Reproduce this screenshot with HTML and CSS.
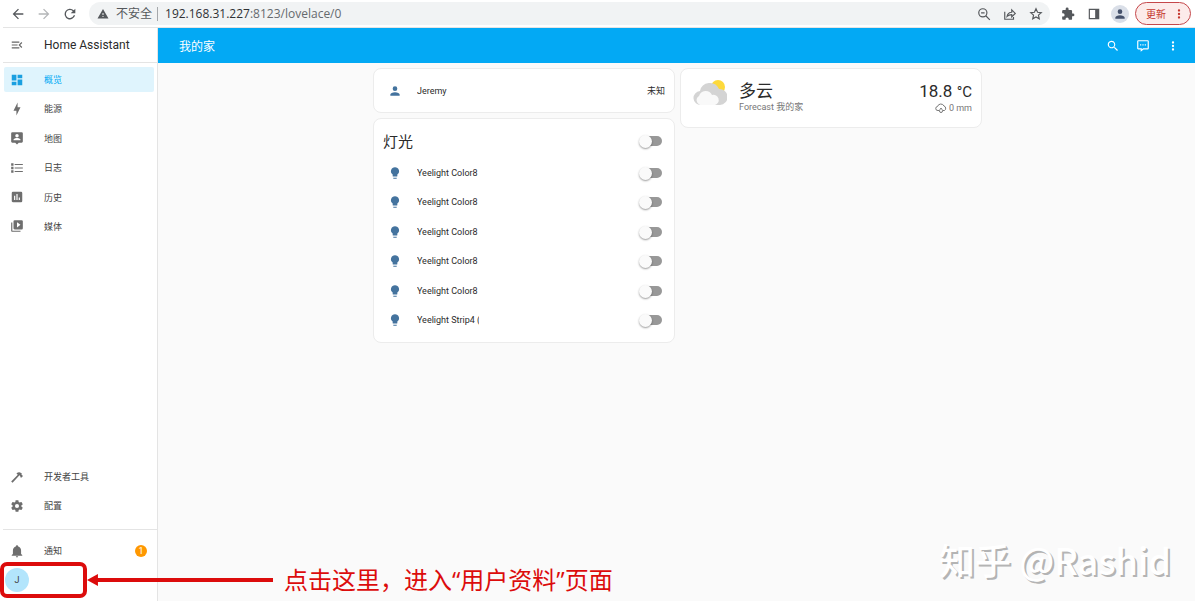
FILE: index.html
```html
<!DOCTYPE html>
<html lang="zh-CN">
<head>
  <meta charset="UTF-8" />
  <meta name="viewport" content="width=device-width, initial-scale=1.0"/>
  <title>Home Assistant</title>
  <link rel="stylesheet" href="styles.css">
</head>
<body>
  <div class="browser-bar">
    <button class="bar-btn" aria-label="后退"><svg viewBox="0 0 24 24"><path d="M20 11H7.8l5.6-5.6L12 4l-8 8 8 8 1.4-1.4L7.8 13H20z"/></svg></button>
    <button class="bar-btn disabled" aria-label="前进"><svg viewBox="0 0 24 24"><path d="M4 11h12.2l-5.6-5.6L12 4l8 8-8 8-1.4-1.4 5.6-5.6H4z"/></svg></button>
    <button class="bar-btn" aria-label="刷新"><svg viewBox="0 0 24 24"><path d="M17.6 6.4A8 8 0 1 0 19.7 14h-2.1A6 6 0 1 1 12 6c1.7 0 3.1.7 4.2 1.8L13 11h7V4z"/></svg></button>
    <div class="address">
      <svg class="warn" viewBox="0 0 24 24"><path d="M1 21h22L12 2zm12-3h-2v-2h2zm0-4h-2v-4h2z"/></svg>
      <span class="insecure">不安全</span>
      <span class="url"><b>192.168.31.227</b>:8123/lovelace/0</span>
      <button class="bar-btn small" aria-label="缩放"><svg viewBox="0 0 24 24" class="line"><circle cx="10" cy="10" r="7"/><path d="M15 15l7 7M7 10h6"/></svg></button>
      <button class="bar-btn small" aria-label="分享"><svg viewBox="0 0 24 24" class="line"><path d="M3 8v13h15v-4M7 16c1-5 4-7 8-7V5l6 6-6 6v-4c-4 0-6 1-8 3z"/></svg></button>
      <button class="bar-btn small" aria-label="收藏"><svg viewBox="0 0 24 24" class="line"><path d="M12 3l2.700 6 6.300.600-4.800 4.300 1.400 6.400L12 17l-5.600 3.300 1.400-6.400L3 9.600 9.300 9z"/></svg></button>
    </div>
    <button class="bar-btn small" aria-label="扩展程序"><svg viewBox="0 0 24 24"><path d="M20.500 11H19V7a2 2 0 0 0-2-2h-4V3.500a2.500 2.500 0 0 0-5 0V5H4a2 2 0 0 0-2 2v3.800h1.500a2.700 2.700 0 0 1 0 5.400H2V20c0 1.100.9 2 2 2h3.800v-1.500a2.700 2.700 0 0 1 5.400 0V22H17a2 2 0 0 0 2-2v-4h1.500a2.500 2.500 0 0 0 0-5z"/></svg></button>
    <button class="bar-btn small" aria-label="侧边栏"><svg viewBox="0 0 24 24"><path d="M3 3h18v18H3zm2 2v14h9V5z"/></svg></button>
    <button class="bar-btn small avatar" aria-label="用户"><svg viewBox="0 0 24 24"><path d="M12 12a4 4 0 1 0 0-8 4 4 0 0 0 0 8zm0 2c-4 0-8 2-8 4v2h16v-2c0-2-4-4-8-4z"/></svg></button>
    <button class="update">更新<svg viewBox="0 0 24 24"><path d="M12 8a2 2 0 1 0 0-4 2 2 0 0 0 0 4zm0 6a2 2 0 1 0 0-4 2 2 0 0 0 0 4zm0 6a2 2 0 1 0 0-4 2 2 0 0 0 0 4z"/></svg></button>
  </div>

  <div class="app">
    <aside class="sidebar">
      <div class="sidebar-title">
        <button class="icon-btn" aria-label="菜单"><svg viewBox="0 0 24 24"><path d="M21 15.600L17.400 12 21 8.400 19.600 7l-5 5 5 5zM3 6h13v2H3zm0 5h10v2H3zm0 5h13v2H3z"/></svg></button>
        <h1>Home Assistant</h1>
      </div>

      <nav class="nav-list nav-main">
        <a href="#" class="active"><svg viewBox="0 0 24 24"><path d="M13 3v6h8V3m-8 18h8V11h-8M3 21h8v-6H3m0-2h8V3H3z"/></svg>概览</a>
        <a href="#"><svg viewBox="0 0 24 24"><path d="M11 15H6l7-14v8h5l-7 14z"/></svg>能源</a>
        <a href="#"><svg viewBox="0 0 24 24"><path d="M20 2H4a2 2 0 0 0-2 2v14c0 1.100.9 2 2 2h5l3 3 3-3h5a2 2 0 0 0 2-2V4a2 2 0 0 0-2-2zm-8 3a3 3 0 1 1 0 6 3 3 0 0 1 0-6zm6 11H6v-1c0-2 4-3 6-3s6 1 6 3z"/></svg>地图</a>
        <a href="#"><svg viewBox="0 0 24 24"><path d="M8 5h14v2H8zm0 6h14v2H8zm0 6h14v2H8zM2 4h4v4H2zm0 6h4v4H2zm0 6h4v4H2z"/></svg>日志</a>
        <a href="#"><svg viewBox="0 0 24 24"><path d="M19 3H5a2 2 0 0 0-2 2v14c0 1.100.9 2 2 2h14a2 2 0 0 0 2-2V5a2 2 0 0 0-2-2zM9 17H7v-7h2zm4 0h-2V7h2zm4 0h-2v-4h2z"/></svg>历史</a>
        <a href="#"><svg viewBox="0 0 24 24"><path d="M4 6H2v14c0 1.100.9 2 2 2h14v-2H4zm16-4H8a2 2 0 0 0-2 2v12c0 1.100.9 2 2 2h12a2 2 0 0 0 2-2V4a2 2 0 0 0-2-2zm-8 12.500v-9l6 4.500z"/></svg>媒体</a>
      </nav>

      <nav class="nav-list nav-tools">
        <a href="#"><svg viewBox="0 0 24 24"><path d="M2 19.600L13.400 8.200 11 6c2.500-2 5-3 8-1l1.500 1.500-1 1 2.800 2.800-3.500 3.500-2.100-4.700-1.200.9L4.400 22z"/></svg>开发者工具</a>
        <a href="#"><svg viewBox="0 0 24 24"><path d="M12 15.500a3.500 3.500 0 1 1 0-7 3.500 3.500 0 0 1 0 7m7.430-2.530c.04-.32.07-.64.07-.97s-.03-.66-.07-1l2.110-1.630c.19-.15.24-.42.12-.64l-2-3.460c-.12-.22-.39-.31-.61-.22l-2.490 1c-.52-.39-1.060-.73-1.690-.98l-.37-2.650A.5.5 0 0 0 14 2h-4c-.25 0-.46.18-.5.42l-.37 2.650c-.63.25-1.170.59-1.690.98l-2.490-1c-.22-.09-.49 0-.61.22l-2 3.460c-.13.22-.07.49.12.64L4.570 11c-.04.34-.07.67-.07 1s.03.65.07.97l-2.110 1.660c-.19.15-.25.42-.12.64l2 3.460c.12.22.39.3.61.22l2.490-1.010c.52.4 1.060.74 1.690.99l.37 2.650c.04.24.25.42.5.42h4c.25 0 .46-.18.5-.42l.37-2.650c.63-.26 1.170-.59 1.690-.99l2.490 1.010c.22.08.49 0 .61-.22l2-3.460c.12-.22.07-.49-.12-.64z"/></svg>配置</a>
      </nav>

      <nav class="nav-list nav-user">
        <a href="#"><svg viewBox="0 0 24 24"><path d="M21 19v1H3v-1l2-2v-6c0-3.100 2-5.800 5-6.700V4a2 2 0 0 1 4 0v.3c3 .9 5 3.600 5 6.700v6zm-7 2a2 2 0 0 1-4 0"/></svg>通知<span class="badge">1</span></a>
        <a href="#" class="profile" aria-label="用户资料"><span class="initial">J</span></a>
      </nav>
    </aside>

    <main class="main">
      <header class="toolbar">
        <h2>我的家</h2>
        <button class="icon-btn" aria-label="搜索"><svg viewBox="0 0 24 24"><path d="M9.500 3a6.500 6.500 0 0 1 4.900 10.700l.3.300h.8l5 5-1.500 1.500-5-5v-.8l-.3-.3A6.500 6.500 0 1 1 9.500 3m0 2a4.500 4.500 0 1 0 0 9 4.500 4.500 0 0 0 0-9z"/></svg></button>
        <button class="icon-btn" aria-label="对话"><svg viewBox="0 0 24 24"><path d="M20 2H4a2 2 0 0 0-2 2v12c0 1.100.9 2 2 2h4v4l5-4h7a2 2 0 0 0 2-2V4a2 2 0 0 0-2-2zm0 14h-8l-2 2v-2H4V4h16zM7 9h2v2H7zm4 0h2v2h-2zm4 0h2v2h-2z"/></svg></button>
        <button class="icon-btn" aria-label="更多"><svg viewBox="0 0 24 24"><path d="M12 8a2 2 0 1 0 0-4 2 2 0 0 0 0 4zm0 6a2 2 0 1 0 0-4 2 2 0 0 0 0 4zm0 6a2 2 0 1 0 0-4 2 2 0 0 0 0 4z"/></svg></button>
      </header>

      <div class="cards">
        <div class="column">
          <section class="card person">
            <div class="row">
              <svg viewBox="0 0 24 24"><path d="M12 4a4 4 0 1 1 0 8 4 4 0 0 1 0-8m0 10c4.400 0 8 1.800 8 4v2H4v-2c0-2.200 3.600-4 8-4z"/></svg>
              <span class="name">Jeremy</span>
              <span class="state">未知</span>
            </div>
          </section>

          <section class="card lights">
            <div class="card-header">
              <label for="all">灯光</label>
              <input type="checkbox" class="switch" id="all">
            </div>
            <div class="rows">
              <div class="row">
                <svg viewBox="0 0 24 24"><path d="M12 2a7 7 0 0 0-4 12.700V17c0 .6.400 1 1 1h6c.6 0 1-.4 1-1v-2.300A7 7 0 0 0 12 2zM9 20h6v1c0 .6-.4 1-1 1h-4c-.6 0-1-.4-1-1z"/></svg>
                <label class="name" for="l1">Yeelight Color8</label>
                <input type="checkbox" class="switch" id="l1">
              </div>
              <div class="row">
                <svg viewBox="0 0 24 24"><path d="M12 2a7 7 0 0 0-4 12.700V17c0 .6.400 1 1 1h6c.6 0 1-.4 1-1v-2.300A7 7 0 0 0 12 2zM9 20h6v1c0 .6-.4 1-1 1h-4c-.6 0-1-.4-1-1z"/></svg>
                <label class="name" for="l2">Yeelight Color8</label>
                <input type="checkbox" class="switch" id="l2">
              </div>
              <div class="row">
                <svg viewBox="0 0 24 24"><path d="M12 2a7 7 0 0 0-4 12.700V17c0 .6.400 1 1 1h6c.6 0 1-.4 1-1v-2.300A7 7 0 0 0 12 2zM9 20h6v1c0 .6-.4 1-1 1h-4c-.6 0-1-.4-1-1z"/></svg>
                <label class="name" for="l3">Yeelight Color8</label>
                <input type="checkbox" class="switch" id="l3">
              </div>
              <div class="row">
                <svg viewBox="0 0 24 24"><path d="M12 2a7 7 0 0 0-4 12.700V17c0 .6.400 1 1 1h6c.6 0 1-.4 1-1v-2.300A7 7 0 0 0 12 2zM9 20h6v1c0 .6-.4 1-1 1h-4c-.6 0-1-.4-1-1z"/></svg>
                <label class="name" for="l4">Yeelight Color8</label>
                <input type="checkbox" class="switch" id="l4">
              </div>
              <div class="row">
                <svg viewBox="0 0 24 24"><path d="M12 2a7 7 0 0 0-4 12.700V17c0 .6.400 1 1 1h6c.6 0 1-.4 1-1v-2.300A7 7 0 0 0 12 2zM9 20h6v1c0 .6-.4 1-1 1h-4c-.6 0-1-.4-1-1z"/></svg>
                <label class="name" for="l5">Yeelight Color8</label>
                <input type="checkbox" class="switch" id="l5">
              </div>
              <div class="row">
                <svg viewBox="0 0 24 24"><path d="M12 2a7 7 0 0 0-4 12.700V17c0 .6.400 1 1 1h6c.6 0 1-.4 1-1v-2.300A7 7 0 0 0 12 2zM9 20h6v1c0 .6-.4 1-1 1h-4c-.6 0-1-.4-1-1z"/></svg>
                <label class="name" for="l6">Yeelight Strip4 (</label>
                <input type="checkbox" class="switch" id="l6">
              </div>
            </div>
          </section>
        </div>

        <div class="column">
          <section class="card weather">
            <svg class="weather-icon" viewBox="0 0 34 28">
              <circle cx="25" cy="8" r="7" fill="#fdd93c"/>
              <path fill="#d4d4d4" d="M8 26a7 7 0 0 1-1-14 10 10 0 0 1 19-2 8 8 0 0 1 1 16z"/>
              <path fill="#f9f9f9" d="M7 26a5 5 0 0 1-1-9 7 7 0 0 1 13-1 5 5 0 0 1 3 10z"/>
            </svg>
            <div class="weather-info">
              <div class="big">多云</div>
              <div class="sub">Forecast 我的家</div>
            </div>
            <div class="weather-temp">
              <div class="big">18.8 <span class="unit">°C</span></div>
              <div class="sub"><svg viewBox="0 0 24 24" class="line"><path d="M8 17H6a4 4 0 0 1-1-8 7 7 0 0 1 13-1 5 5 0 0 1 1 9h-3M12 12c-2 3-3 4-3 6a3 3 0 0 0 6 0c0-2-1-3-3-6z"/></svg>0 mm</div>
            </div>
          </section>
        </div>
      </div>
    </main>
  </div>

  <!-- guide: where to click -->
  <div class="guide">
    <div class="guide-box"></div>
    <svg class="guide-arrow" viewBox="0 0 187 14"><path d="M0 7l11-6v4h176v4H11v4z"/></svg>
    <p>点击这里，进入“用户资料”页面</p>
  </div>

  <div class="watermark">知乎 @Rashid</div>
</body>
</html>
```

FILE: styles.css
```css
:root {
  --primary: #03a9f4;
  --bg: #fafafa;
  --text: #2b2b2b;
  --text-2: #777;
  --line: #e4e4e4;
  --icon: #44739e;
  --red: #dc0c0c;
}

* {
  box-sizing: border-box;
  margin: 0;
  padding: 0;
}

body {
  position: relative;
  display: flex;
  flex-direction: column;
  min-height: 100vh;
  padding: 0 7px 10px 3px;
  background: #fff;
  color: var(--text);
  font-family: Roboto, "Noto Sans CJK SC", sans-serif;
  font-size: 9px;
}

button {
  border: none;
  background: none;
  color: inherit;
  font-family: inherit;
  cursor: pointer;
}

svg {
  display: block;
  flex-shrink: 0;
  fill: currentColor;
}

svg.line {
  fill: none;
  stroke: currentColor;
  stroke-width: 2;
}

/* browser bar */
.browser-bar {
  display: flex;
  align-items: center;
  gap: 10px;
  height: 27px;
  padding: 0 4px 0 7px;
  color: #55585c;
}

.bar-btn svg {
  width: 16px;
  height: 16px;
}

.bar-btn.small svg {
  width: 14px;
  height: 14px;
}

.bar-btn.disabled {
  color: #b4b6b8;
}

.address {
  flex: 1;
  display: flex;
  align-items: center;
  gap: 12px;
  height: 23px;
  margin: 0 1px;
  padding: 0 7px 0 8px;
  border-radius: 12px;
  background: #f1f3f4;
  font-family: "Open Sans", "Noto Sans CJK SC", sans-serif;
  font-size: 12px;
}

.address .warn {
  width: 12px;
  height: 12px;
  margin-right: -5px;
}

.insecure {
  padding-right: 5px;
  border-right: 1px solid #a5a8ab;
  line-height: 14px;
  margin-right: -5px;
}

.url {
  flex: 1;
  color: #666a6e;
}

.url b {
  color: #303134;
  font-weight: 400;
}

.avatar {
  display: flex;
  align-items: center;
  justify-content: center;
  width: 18px;
  height: 18px;
  border-radius: 50%;
  background: #dadfe8;
  color: #45516b;
}

.browser-bar > .small {
  margin-right: 2px;
}

.browser-bar > .avatar {
  margin: 0 -4px 0 -2px;
}

.update {
  display: flex;
  align-items: center;
  gap: 6px;
  height: 23px;
  padding: 0 4px 0 10px;
  border: 1px solid #c5474a;
  border-radius: 12px;
  background: #fcebea;
  color: #c5372f;
  font-size: 10px;
}

.update svg {
  width: 14px;
  height: 14px;
}

/* layout */
.app {
  flex: 1;
  display: flex;
  border-top: 1px solid var(--line);
}

.sidebar {
  display: flex;
  flex-direction: column;
  width: 155px;
  border-right: 1px solid var(--line);
}

.sidebar-title {
  display: flex;
  align-items: center;
  gap: 20px;
  height: 35px;
  padding-left: 7px;
  border-bottom: 1px solid var(--line);
}

.sidebar-title h1 {
  font-size: 12px;
  font-weight: 400;
}

.icon-btn svg {
  width: 14px;
  height: 14px;
}

.sidebar-title .icon-btn {
  color: #666;
}

.nav-list {
  display: flex;
  flex-direction: column;
  justify-content: space-between;
  padding: 0 3px 0 1px;
}

.nav-main {
  min-height: 172px;
  margin: 4px 0 auto;
}

.nav-tools {
  gap: 4px;
  padding-bottom: 11px;
  border-bottom: 1px solid var(--line);
}

.nav-user {
  gap: 4px;
  padding-top: 8px;
  padding-bottom: 9px;
}

.nav-list a {
  display: flex;
  align-items: center;
  gap: 20px;
  height: 25px;
  padding: 0 7px 0 6px;
  border-radius: 2px;
  color: #424242;
  text-decoration: none;
}

.nav-list a svg {
  width: 14px;
  height: 14px;
  color: #6e6e6e;
}

.nav-list a.active {
  background: #dff4fd;
  color: var(--primary);
}

.nav-list a.active svg {
  color: #1a9fe0;
}

.badge {
  width: 12px;
  margin-left: auto;
  border-radius: 50%;
  background: #ff9800;
  color: #fff;
  line-height: 12px;
  text-align: center;
}

.nav-list .profile {
  padding: 0 1px;
}

.initial {
  width: 24px;
  border-radius: 50%;
  background: #b3e5fc;
  line-height: 24px;
  text-align: center;
}

.main {
  flex: 1;
  background: var(--bg);
}

.toolbar {
  display: flex;
  align-items: center;
  gap: 16px;
  height: 35px;
  padding: 0 15px 0 21px;
  background: var(--primary);
  color: #fff;
}

.toolbar h2 {
  flex: 1;
  font-size: 12px;
  font-weight: 400;
}

/* cards */
.cards {
  display: flex;
  justify-content: center;
  gap: 5px;
  padding: 5px 5px 5px 7px;
}

.column {
  display: flex;
  flex-direction: column;
  flex: 0 1 302px;
  gap: 5px;
}

.card {
  border: 1px solid #ececec;
  border-radius: 8px;
  background: #fff;
}

.person {
  padding: 9px;
}

.lights {
  padding: 9px;
}

.card-header {
  display: flex;
  align-items: center;
  justify-content: space-between;
  height: 25px;
  padding-right: 3px;
  font-size: 15px;
}

.rows {
  display: flex;
  flex-direction: column;
  justify-content: space-between;
  min-height: 173px;
  margin-top: 7px;
  padding-right: 3px;
}

.row {
  display: flex;
  align-items: center;
  height: 25px;
  padding-left: 5px;
}

.row svg {
  width: 14px;
  height: 14px;
  margin-right: 15px;
  color: var(--icon);
}

.name {
  width: 62px;
  margin-right: auto;
  overflow: hidden;
  white-space: nowrap;
}

.switch {
  position: relative;
  appearance: none;
  width: 21px;
  height: 10px;
  border-radius: 5px;
  background: #989898;
  cursor: pointer;
}

.switch::before {
  content: "";
  position: absolute;
  top: -1px;
  left: -2px;
  width: 13px;
  height: 13px;
  border-radius: 50%;
  background: #fafafa;
  box-shadow: 0 1px 2px rgba(0, 0, 0, 0.4);
}

.switch:checked::before {
  left: 10px;
  background: var(--primary);
}

.weather {
  display: flex;
  align-items: flex-start;
  height: 60px;
  padding: 10px 9px 10px 12px;
}

.weather-icon {
  width: 34px;
  height: 28px;
  margin-right: 12px;
}

.weather-info {
  flex: 1;
}

.big {
  font-size: 17px;
  line-height: 24px;
}

.unit {
  font-size: 15px;
}

.sub {
  display: flex;
  align-items: center;
  justify-content: flex-end;
  gap: 2px;
  color: var(--text-2);
  line-height: 8px;
}

.weather-info .sub {
  justify-content: flex-start;
}

.sub svg {
  width: 12px;
  height: 12px;
  margin: -2px 0;
}

/* guide marks over the page */
.guide {
  position: absolute;
  left: 0;
  bottom: 13px;
  display: flex;
  align-items: center;
  pointer-events: none;
}

.guide-box {
  width: 87px;
  height: 36px;
  border: 4px solid var(--red);
  border-radius: 7px;
}

.guide-arrow {
  width: 186px;
  height: 14px;
  fill: var(--red);
}

.guide p {
  margin-left: 11px;
  color: var(--red);
  font-family: "Open Sans", "Noto Sans CJK SC", sans-serif;
  font-size: 24px;
  line-height: 36px;
}

.watermark {
  position: absolute;
  right: 31px;
  bottom: 28px;
  color: #fff;
  font-family: "Noto Sans CJK SC", sans-serif;
  font-size: 36px;
  font-weight: 500;
  line-height: 48px;
  text-shadow: 2px 2px 0 #b4b4b4;
  pointer-events: none;
}
```
